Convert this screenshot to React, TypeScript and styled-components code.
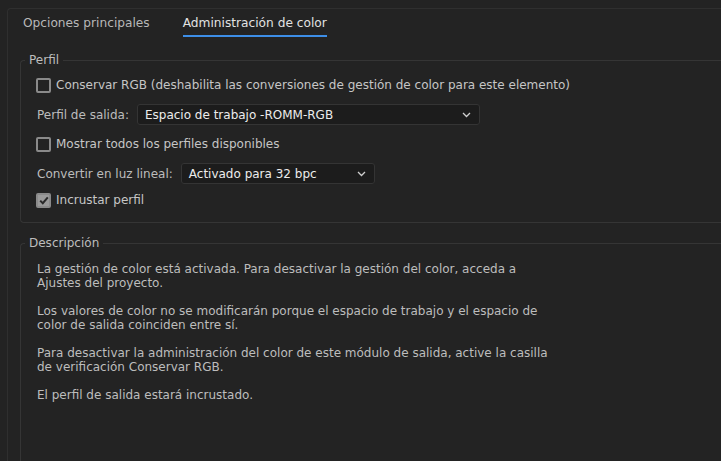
import React from 'react';
import styled, { createGlobalStyle, css } from 'styled-components';

const GlobalStyle = createGlobalStyle`
    html, body {
        margin: 0;
        padding: 0;
        background: #232323;
        overflow: hidden;
    }
    body {
        font-family: 'DejaVu Sans', 'Noto Sans', sans-serif;
        font-size: 12px;
        color: #c4c4c4;
    }
`;

const Frame = styled.div`
    margin: 8px 0 0 7px;
    height: 453px;
    display: flex;
    flex-direction: column;
    overflow: hidden;
    border: 1px solid #2f2f2f;
    border-right: none;
    border-bottom: none;
    border-top-left-radius: 4px;
    box-sizing: border-box;
`;

const TabBar = styled.div`
    display: flex;
    gap: 33px;
    padding-left: 15px;
    height: 27px;
    flex: none;
`;

const Tab = styled.div<{ $active?: boolean }>`
    display: flex;
    align-items: center;
    height: 25px;
    padding-top: 1px;
    font-size: 12.2px;
    color: ${(p) => (p.$active ? '#e2e2e2' : '#b8b8b8')};
    border-bottom: 2px solid ${(p) => (p.$active ? '#3d8ee8' : 'transparent')};
`;

const Content = styled.div`
    flex: 1;
    display: flex;
    flex-direction: column;
    gap: 13px;
    padding: 17px 0 0 12px;
    min-height: 0;
`;

const Group = styled.fieldset<{ $grow?: boolean }>`
    margin: 0;
    border: 1px solid #353535;
    border-right: none;
    border-radius: 4px 0 0 4px;
    padding: 10px 0 14px 15px;
    min-width: 0;
    ${(p) =>
        p.$grow &&
        css`
            flex: 1;
            border-bottom: none;
            border-radius: 4px 0 0 0;
            padding-top: 12px;
        `}
`;

const Legend = styled.legend`
    padding: 0 4px;
    margin-left: -11px;
    font-size: 12px;
    color: #bdbdbd;
    line-height: 14px;
`;

const Rows = styled.div`
    display: flex;
    flex-direction: column;
    gap: 11px;
`;

const Row = styled.label<{ $tight?: boolean }>`
    display: flex;
    align-items: center;
    gap: 5px;
    min-height: 16px;
    color: #c6c6c6;
    ${(p) => p.$tight && 'margin-top: -3px;'}
`;

const FieldRow = styled.div`
    display: flex;
    align-items: center;
    gap: 8px;
    padding-left: 1px;
    color: #bcbcbc;
`;

const Box = styled.span<{ $checked?: boolean }>`
    width: 15px;
    height: 15px;
    box-sizing: border-box;
    border: 2px solid #8a8a8a;
    border-radius: 2px;
    display: flex;
    align-items: center;
    justify-content: center;
    background: ${(p) => (p.$checked ? '#9a9a9a' : 'transparent')};
`;

const Select = styled.div<{ $width: number }>`
    width: ${(p) => p.$width}px;
    height: 21px;
    box-sizing: border-box;
    display: flex;
    align-items: center;
    justify-content: space-between;
    padding: 0 8px 0 7px;
    background: #1c1c1c;
    border: 1px solid #343434;
    border-radius: 3px;
    color: #ececec;
`;

const Text = styled.div`
    display: flex;
    flex-direction: column;
    gap: 14px;
    padding-left: 1px;
    line-height: 14px;
    color: #bdbdbd;
`;

const Para = styled.p`
    margin: 0;
`;

const Chevron = () => (
    <svg width="9" height="6" viewBox="0 0 9 6">
        <path d="M1 1l3.5 3.5L8 1" fill="none" stroke="#cfcfcf" strokeWidth="1.3" />
    </svg>
);

const Check = ({ checked }: { checked?: boolean }) => (
    <Box $checked={checked}>
        {checked && (
            <svg width="10" height="9" viewBox="0 0 10 9">
                <path d="M1.2 4.6l2.6 2.6L8.8 1.4" fill="none" stroke="#2a2a2a" strokeWidth="2" />
            </svg>
        )}
    </Box>
);

export default function App() {
    return (
        <>
            <GlobalStyle />
            <Frame>
                <TabBar>
                    <Tab>Opciones principales</Tab>
                    <Tab $active>Administración de color</Tab>
                </TabBar>
                <Content>
                    <Group>
                        <Legend>Perfil</Legend>
                        <Rows>
                            <Row>
                                <Check />
                                Conservar RGB (deshabilita las conversiones de gestión de color para este elemento)
                            </Row>
                            <FieldRow>
                                Perfil de salida:
                                <Select $width={343}>
                                    Espacio de trabajo -ROMM-RGB
                                    <Chevron />
                                </Select>
                            </FieldRow>
                            <Row>
                                <Check />
                                Mostrar todos los perfiles disponibles
                            </Row>
                            <FieldRow>
                                Convertir en luz lineal:
                                <Select $width={194}>
                                    Activado para 32 bpc
                                    <Chevron />
                                </Select>
                            </FieldRow>
                            <Row $tight>
                                <Check checked />
                                Incrustar perfil
                            </Row>
                        </Rows>
                    </Group>
                    <Group $grow>
                        <Legend>Descripción</Legend>
                        <Text>
                            <Para>
                                La gestión de color está activada. Para desactivar la gestión del color, acceda a
                                <br />
                                Ajustes del proyecto.
                            </Para>
                            <Para>
                                Los valores de color no se modificarán porque el espacio de trabajo y el espacio de
                                <br />
                                color de salida coinciden entre sí.
                            </Para>
                            <Para>
                                Para desactivar la administración del color de este módulo de salida, active la casilla
                                <br />
                                de verificación Conservar RGB.
                            </Para>
                            <Para>El perfil de salida estará incrustado.</Para>
                        </Text>
                    </Group>
                </Content>
            </Frame>
        </>
    );
}
